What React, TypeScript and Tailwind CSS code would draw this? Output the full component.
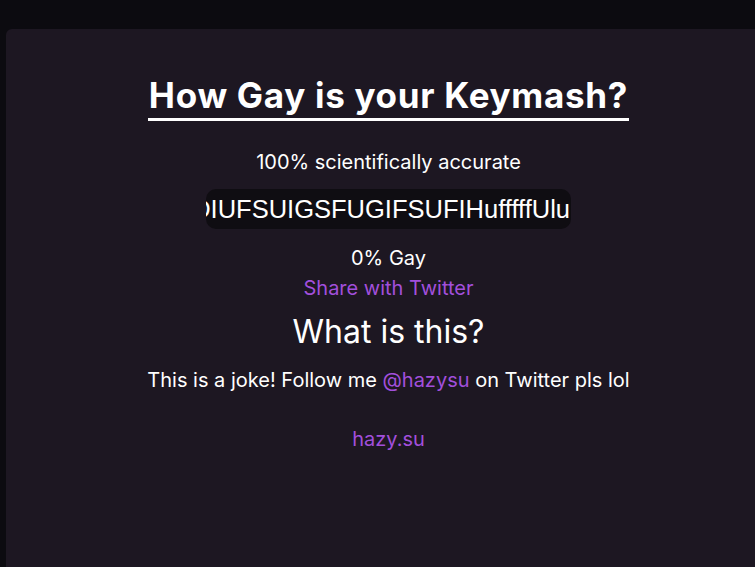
export default function App() {
  const mash = "DIUFSUIGSFUGIFSUFIHufffffUlu";

  return (
    <div className="h-screen overflow-hidden bg-[#0c0b10] pt-[29px] pl-[6px] font-['Inter','Liberation_Sans',Arial,sans-serif] text-white">
      <div className="w-[765px] h-full rounded-tl-md bg-[#1d1722] flex flex-col items-center pt-[44px]">
        <h1 className="border-b-[3px] border-white px-[1px] text-[35px] leading-[45px] font-bold tracking-[0.7px]">
          How Gay is your Keymash?
        </h1>
        <p className="mt-[29px] text-[20px] leading-[24px]">100% scientifically accurate</p>
        <div className="mt-[15px] w-[365px] h-[40px] rounded-[10px] bg-[#0f0d12] overflow-hidden flex items-center justify-end">
          <span className="whitespace-nowrap text-[25.5px] leading-[30px] pr-[1px] font-['Liberation_Sans',Arial,sans-serif]">{mash}</span>
        </div>
        <p className="mt-[17px] text-[20px] leading-[24px]">0% Gay</p>
        <a className="mt-[6px] text-[20px] leading-[24px] text-[#a24fdc]">Share with Twitter</a>
        <h2 className="mt-[12px] text-[32px] leading-[40px]">What is this?</h2>
        <p className="mt-[16px] text-[20px] leading-[24px]">
          This is a joke! Follow me <a className="text-[#a24fdc]">@hazysu</a> on Twitter pls lol
        </p>
        <a className="mt-[35px] text-[20px] leading-[24px] text-[#a24fdc]">hazy.su</a>
      </div>
    </div>
  );
}
